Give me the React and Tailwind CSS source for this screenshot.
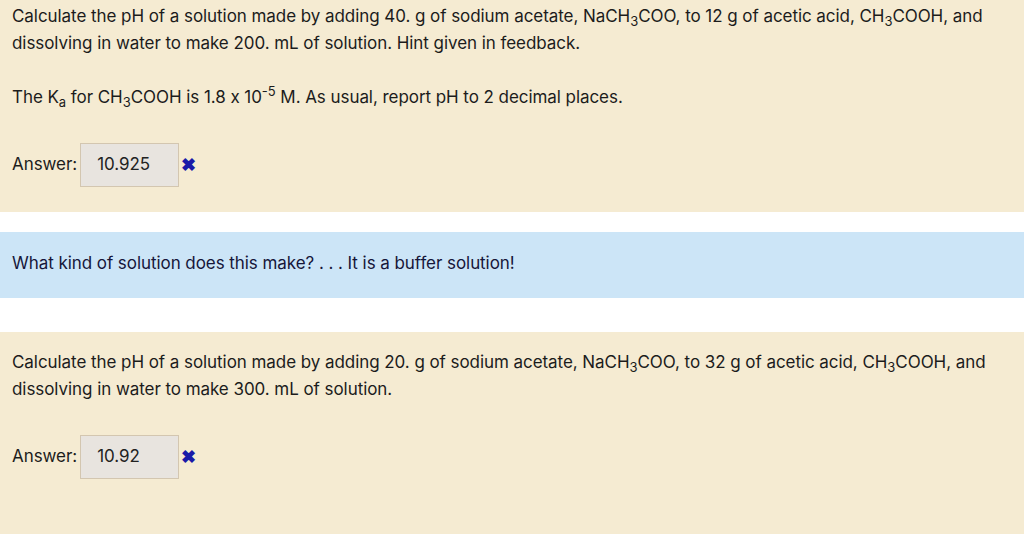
import React from "react";

const font = { fontFamily: "Inter, 'Noto Sans', sans-serif" };

// small helpers for the chem formulas
const Sub = ({ children }) => (
  <span className="relative top-[4px] text-[13px] leading-none">{children}</span>
);
const Sup = ({ children }) => (
  <span className="relative top-[-7px] text-[13px] leading-none">{children}</span>
);

function AnswerRow({ value }) {
  return (
    <div className="flex items-center">
      <span className="mr-[3px]">Answer:</span>
      <div className="w-[99px] h-[44px] bg-[#e8e4df] border border-[#d3c6b0] flex items-center pl-[16px] text-[#222]">
        {value}
      </div>
      <span className="ml-[2px] text-[#1a1aa8] text-[18px] font-bold leading-none">✖</span>
    </div>
  );
}

export default function App() {
  return (
    <div
      className="w-[1024px] h-[534px] bg-white text-[17px] tracking-[-0.06px] text-[#1c1c1c] [font-feature-settings:'calt'_0]"
      style={font}
    >
      {/* question 1 */}
      <div className="bg-[#f5ebd2] h-[212px] px-[12px] pt-[3px]">
        <p className="leading-[27px]">
          Calculate the pH of a solution made by adding 40. g of sodium acetate, NaCH<Sub>3</Sub>COO, to 12 g of acetic acid, CH<Sub>3</Sub>COOH, and dissolving in water to make 200. mL of solution. Hint given in feedback.
        </p>
        <p className="leading-[27px] mt-[27px]">
          The K<Sub>a</Sub> for CH<Sub>3</Sub>COOH is 1.8 x 10<Sup>-5</Sup> M. As usual, report pH to 2 decimal places.
        </p>
        <div className="mt-[32px]">
          <AnswerRow value="10.925" />
        </div>
      </div>

      <div className="h-[20px]" />

      {/* feedback */}
      <div className="bg-[#cce5f7] h-[66px] px-[12px] pb-[2px] flex items-center text-[#16163a]">
        What kind of solution does this make? . . . It is a buffer solution!
      </div>

      <div className="h-[34px]" />

      {/* question 2 */}
      <div className="bg-[#f5ebd2] h-[202px] px-[12px] pt-[17px]">
        <p className="leading-[27px]">
          Calculate the pH of a solution made by adding 20. g of sodium acetate, NaCH<Sub>3</Sub>COO, to 32 g of acetic acid, CH<Sub>3</Sub>COOH, and dissolving in water to make 300. mL of solution.
        </p>
        <div className="mt-[32px]">
          <AnswerRow value="10.92" />
        </div>
      </div>
    </div>
  );
}
